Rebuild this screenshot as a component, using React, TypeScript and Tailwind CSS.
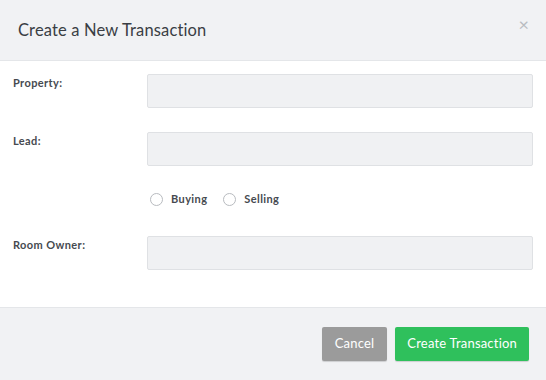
import React, { useState } from "react";

const fields = ["Property:", "Lead:"];

export default function App() {
  const [side, setSide] = useState<"buying" | "selling" | null>(null);

  return (
    <div
      className="w-[546px] h-[380px] bg-white flex flex-col overflow-hidden"
      style={{ fontFamily: "Lato, 'Open Sans', sans-serif" }}
    >
      {/* Header */}
      <div className="h-[61px] shrink-0 bg-[#f1f2f4] border-b border-[#e4e6e9] flex items-center justify-between pl-[18px] pr-[17px]">
        <h2 className="text-[16.5px] text-[#3a3e44] tracking-[0.15px]">Create a New Transaction</h2>
        <button className="text-[#b9bcc1] text-[18px] leading-none self-start mt-[15px]">×</button>
      </div>

      {/* Body */}
      <div className="flex-1 flex flex-col pt-[13px] px-[13px]">
        {fields.map((label) => (
          <div key={label} className="flex mb-[24px]">
            <label className="w-[134px] pt-[1px] text-[11px] font-bold text-[#464a50] tracking-[0.4px]">{label}</label>
            <input className="flex-1 h-[34px] bg-[#f0f1f3] border border-[#dfe1e4] rounded-[2px]" />
          </div>
        ))}

        <div className="flex items-center gap-[16px] pl-[137px] h-[20px] mt-[-1px]">
          {(["buying", "selling"] as const).map((v) => (
            <label key={v} className="flex items-center gap-[8px] cursor-pointer" onClick={() => setSide(v)}>
              <span className="w-[13px] h-[13px] rounded-full border border-[#b8bbbf] bg-white flex items-center justify-center">
                {side === v && <span className="w-[7px] h-[7px] rounded-full bg-[#2fbf5e]" />}
              </span>
              <span className="text-[11px] font-bold text-[#464a50] tracking-[0.4px]">
                {v === "buying" ? "Buying" : "Selling"}
              </span>
            </label>
          ))}
        </div>

        <div className="flex mt-[27px]">
          <label className="w-[134px] pt-[1px] text-[11px] font-bold text-[#464a50] tracking-[0.4px]">Room Owner:</label>
          <input className="flex-1 h-[34px] bg-[#f0f1f3] border border-[#dfe1e4] rounded-[2px]" />
        </div>
      </div>

      {/* Footer */}
      <div className="h-[73px] shrink-0 bg-[#f1f2f4] border-t border-[#e4e6e9] flex items-start justify-end gap-[8px] pt-[19px] pr-[17px]">
        <button className="h-[34px] px-[13px] bg-[#9b9b9b] text-white text-[13px] tracking-[0.2px] rounded-[2px] shadow-[0_1px_1px_rgba(0,0,0,0.15)]">
          Cancel
        </button>
        <button className="h-[34px] px-[12px] bg-[#2fc05c] text-white text-[13px] tracking-[0.2px] rounded-[2px] shadow-[0_1px_1px_rgba(0,0,0,0.15)]">
          Create Transaction
        </button>
      </div>
    </div>
  );
}
